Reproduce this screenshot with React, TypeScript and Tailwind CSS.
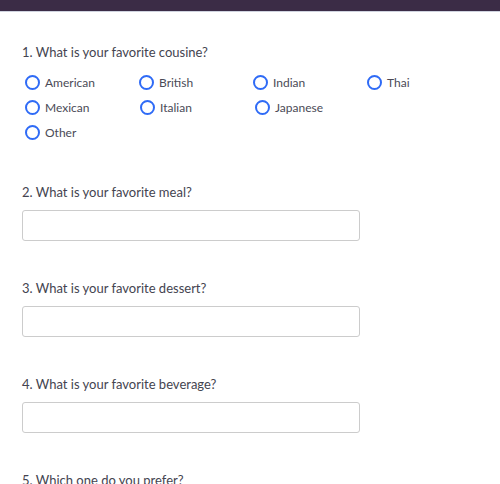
const cuisineRows = [
  ["American", "British", "Indian", "Thai"],
  ["Mexican", "Italian", "Japanese"],
  ["Other"],
];

const textQuestions = [
  "2. What is your favorite meal?",
  "3. What is your favorite dessert?",
  "4. What is your favorite beverage?",
];

function Radio({ label }: { label: string }) {
  return (
    <label className="flex items-center w-[115px] h-[25px] gap-[5px] cursor-pointer">
      <span className="w-[15px] h-[15px] rounded-full border-2 border-[#2f6bf6] bg-white shrink-0 ml-[3px]" />
      <span className="text-[12px] text-[#4a4a56]">{label}</span>
    </label>
  );
}

export default function App() {
  return (
    <div className="min-h-[484px] bg-white font-['Lato',sans-serif] text-[#3f3f4a]">
      <div className="h-3 bg-[#3b2c46] border-b border-[#cfd3df]" />

      <div className="px-[22px] pt-[31px]">
        {/* Q1 */}
        <div className="text-[13px] leading-[18px] text-[#444450]">1. What is your favorite cousine?</div>
        <div className="mt-[9px] flex flex-col">
          {cuisineRows.map((row, i) => (
            <div key={i} className="flex">
              {row.map((c) => (
                <Radio key={c} label={c} />
              ))}
            </div>
          ))}
        </div>

        {textQuestions.map((q) => (
          <div key={q} className="mt-[38px]">
            <div className="text-[13px] leading-[18px] text-[#444450]">{q}</div>
            <input
              type="text"
              className="mt-[9px] block w-[338px] h-[31px] rounded-[3px] border border-[#cccccc] bg-white px-2 text-[13px] outline-none"
            />
          </div>
        ))}

        <div className="mt-[38px] text-[13px] leading-[18px] text-[#444450]">5. Which one do you prefer?</div>
      </div>
    </div>
  );
}
